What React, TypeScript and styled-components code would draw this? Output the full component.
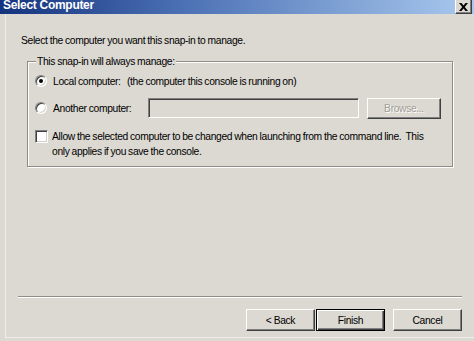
import React, { FC } from 'react';
import styled, { createGlobalStyle } from 'styled-components';

const GlobalStyle = createGlobalStyle`
  html, body {
    margin: 0;
    padding: 0;
    width: 474px;
    height: 341px;
    overflow: hidden;
    background: #dcd9d2;
  }
  * { box-sizing: border-box; }
`;

const Window = styled.div`
  width: 474px;
  height: 341px;
  display: flex;
  flex-direction: column;
  background: #dcd9d2;
  font-family: "Liberation Sans", Arial, sans-serif;
  font-size: 10.3px;
  letter-spacing: -0.35px;
  word-spacing: -0.4px;
  color: #000;
`;

const TitleBar = styled.div`
  height: 14px;
  flex: none;
  display: flex;
  align-items: flex-start;
  justify-content: space-between;
  padding: 0 2px 0 3px;
  overflow: hidden;
  background: linear-gradient(to right, #14337e 0%, #4e73b6 40%, #a9c9ee 100%);
`;

const TitleText = styled.span`
  color: #fff;
  font-weight: bold;
  font-size: 12px;
  line-height: 12px;
  margin-top: -1px;
  letter-spacing: -0.3px;
  word-spacing: 0;
`;

const CloseButton = styled.div`
  width: 17px;
  height: 14px;
  flex: none;
  display: flex;
  align-items: center;
  justify-content: center;
  background: #dcd9d2;
  border-right: 1px solid #404040;
  border-bottom: 1px solid #404040;
  border-left: 1px solid #fff;
  box-shadow: inset -1px -1px 0 #808080;
`;

const Body = styled.div`
  flex: 1;
  display: flex;
  flex-direction: column;
  padding: 0 12px 6px 9px;
  border-left: 1px solid #efede9;
  margin-left: 5px;
  border-bottom: 1px solid #efede9;
  margin-bottom: 3px;
`;

const Intro = styled.p`
  margin: 20px 0 0 6px;
  line-height: 13px;
`;

const Group = styled.fieldset`
  margin: 8px 0 0 12px;
  width: 426px;
  height: 112px;
  padding: 0 0 0 7px;
  border: 1px solid #8f8c86;
  box-shadow: inset 1px 1px 0 #fff, 1px 1px 0 #fff;
  display: flex;
  flex-direction: column;
`;

const Legend = styled.legend`
  padding: 0 1px;
  margin-left: 1px;
  line-height: 13px;
  background: #dcd9d2;
`;

const OptionRow = styled.label<{ $gap?: number }>`
  display: flex;
  align-items: center;
  height: 20px;
  margin-top: ${p => p.$gap ?? 0}px;
`;

const Radio = styled.span<{ $checked?: boolean }>`
  position: relative;
  width: 12px;
  height: 12px;
  flex: none;
  border-radius: 50%;
  margin-right: 6px;
  background: #fff;
  border: 1px solid;
  border-color: #808080 #fff #fff #808080;
  box-shadow: inset 1px 1px 0 #404040, inset -1px -1px 0 #d4d0c8;

  &::after {
    content: '';
    position: absolute;
    left: 3px;
    top: 3px;
    width: 4px;
    height: 4px;
    border-radius: 50%;
    background: #000;
    display: ${p => (p.$checked ? 'block' : 'none')};
  }
`;

const OptionLabel = styled.span`
  line-height: 13px;
  white-space: pre;
`;

const TextBox = styled.div`
  width: 211px;
  height: 20px;
  margin-left: auto;
  border: 1px solid;
  border-color: #808080 #fff #fff #808080;
  box-shadow: inset 1px 1px 0 #404040, inset -1px -1px 0 #dcd9d2;
  background: #dcd9d2;
`;

const BrowseButton = styled.div`
  width: 74px;
  height: 21px;
  margin: 0 11px 0 8px;
  display: flex;
  align-items: center;
  justify-content: center;
  color: #a19e98;
  text-shadow: 1px 1px 0 #fff;
  border: 1px solid;
  border-color: #fff #404040 #404040 #fff;
  box-shadow: inset -1px -1px 0 #808080;
`;

const CheckRow = styled.label`
  display: flex;
  align-items: flex-start;
  margin-top: 11px;
`;

const CheckBox = styled.span`
  width: 13px;
  height: 13px;
  flex: none;
  margin: 1px 4px 0 0;
  background: #fff;
  border: 1px solid;
  border-color: #808080 #fff #fff #808080;
  box-shadow: inset 1px 1px 0 #404040, inset -1px -1px 0 #d4d0c8;
`;

const CheckText = styled.span`
  width: 376px;
  line-height: 15px;
`;

const Spacer = styled.div`
  flex: 1;
`;

const Separator = styled.div`
  height: 2px;
  margin-left: 3px;
  border-top: 1px solid #8f8c86;
  border-bottom: 1px solid #fff;
`;

const ButtonRow = styled.div`
  display: flex;
  justify-content: flex-end;
  margin-top: 11px;
`;

const Button = styled.div<{ $default?: boolean; $gap?: number }>`
  width: 69px;
  height: 22px;
  margin-left: ${p => p.$gap ?? 0}px;
  display: flex;
  align-items: center;
  justify-content: center;
  line-height: 13px;
  border: 1px solid;
  border-color: ${p => (p.$default ? '#000' : '#fff #404040 #404040 #fff')};
  box-shadow: ${p => (p.$default
    ? 'inset 1px 1px 0 #fff, inset -1px -1px 0 #404040, inset -2px -2px 0 #808080'
    : 'inset -1px -1px 0 #808080')};
`;

const CloseIcon: FC = () => (
  <svg width="9" height="8" viewBox="0 0 9 8">
    <path d="M0 0h2.5L4.5 2.6 6.5 0H9L5.8 4 9 8H6.5L4.5 5.4 2.5 8H0l3.2-4z" fill="#000" />
  </svg>
);

const App: FC = () => (
  <>
    <GlobalStyle />
    <Window>
      <TitleBar>
        <TitleText>Select Computer</TitleText>
        <CloseButton><CloseIcon /></CloseButton>
      </TitleBar>
      <Body>
        <Intro>Select the computer you want this snap-in to manage.</Intro>
        <Group>
          <Legend>This snap-in will always manage:</Legend>
          <OptionRow $gap={3}>
            <Radio $checked />
            <OptionLabel>Local computer:   (the computer this console is running on)</OptionLabel>
          </OptionRow>
          <OptionRow $gap={7}>
            <Radio />
            <OptionLabel>Another computer:</OptionLabel>
            <TextBox />
            <BrowseButton>Browse...</BrowseButton>
          </OptionRow>
          <CheckRow>
            <CheckBox />
            <CheckText>
              Allow the selected computer to be changed when launching from the command line.{'\u00a0 '}This only applies if you save the console.
            </CheckText>
          </CheckRow>
        </Group>
        <Spacer />
        <Separator />
        <ButtonRow>
          <Button>&lt; Back</Button>
          <Button $default $gap={1}>Finish</Button>
          <Button $gap={8}>Cancel</Button>
        </ButtonRow>
      </Body>
    </Window>
  </>
);

export default App;
